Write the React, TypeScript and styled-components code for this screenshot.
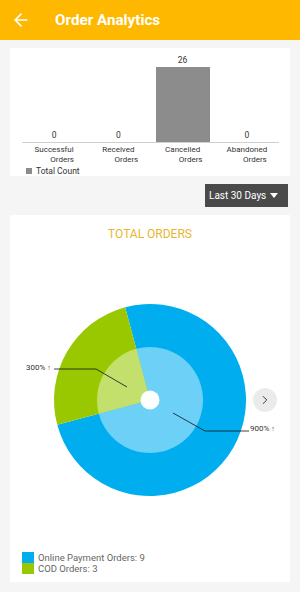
import React from "react";
import styled, { createGlobalStyle } from "styled-components";
import { ArrowLeft, ChevronRight } from "lucide-react";

const Global = createGlobalStyle`
  html, body { margin: 0; padding: 0; background: #f5f5f5; }
  body { font-family: Roboto, "Noto Sans", sans-serif; }
`;

const Page = styled.div`
  width: 300px;
  height: 592px;
  background: #f5f5f5;
  display: flex;
  flex-direction: column;
  overflow: hidden;
`;

const Header = styled.header`
  height: 40px;
  background: #ffb800;
  display: flex;
  align-items: center;
  padding-left: 11px;
  gap: 24px;
  color: #fff;
  flex-shrink: 0;
`;

const Title = styled.h1`
  margin: 0;
  font-size: 15.2px;
  font-weight: 700;
  color: #fff;
`;

const Card = styled.section<{ $top: number; $height: number }>`
  margin: ${(p) => p.$top}px 10px 0 10px;
  height: ${(p) => p.$height}px;
  background: #fff;
  box-sizing: border-box;
  display: flex;
  flex-direction: column;
  flex-shrink: 0;
`;

const BarCard = styled(Card)`
  padding: 0 11px 0 12px;
`;

const Plot = styled.div`
  height: 94px;
  display: flex;
  align-items: flex-end;
  border-bottom: 1px solid #cfcfcf;
`;

const BarSlot = styled.div`
  flex: 1;
  display: flex;
  flex-direction: column;
  align-items: center;
  justify-content: flex-end;
`;

const BarValue = styled.span`
  font-size: 8.5px;
  line-height: 11px;
  color: #333;
  margin-bottom: 1px;
`;

const Bar = styled.div<{ $h: number }>`
  width: 54px;
  height: ${(p) => p.$h}px;
  background: #8c8c8c;
`;

const Labels = styled.div`
  display: flex;
  padding-top: 2px;
`;

const Label = styled.div`
  flex: 1;
  display: flex;
  flex-direction: column;
  align-items: center;
  font-size: 8px;
  line-height: 9.5px;
  color: #333;
`;

const LabelSecond = styled.span`
  padding-left: 16px;
`;

const BarLegend = styled.div`
  display: flex;
  align-items: center;
  gap: 4px;
  margin-top: 2px;
  padding-left: 4px;
  font-size: 8.5px;
  color: #333;
`;

const LegendDot = styled.span<{ $c: string; $w: number; $h: number }>`
  width: ${(p) => p.$w}px;
  height: ${(p) => p.$h}px;
  background: ${(p) => p.$c};
  display: inline-block;
  flex-shrink: 0;
`;

const FilterRow = styled.div`
  display: flex;
  justify-content: flex-end;
  padding: 8px 12px 0 0;
  flex-shrink: 0;
`;

const Dropdown = styled.button`
  width: 83px;
  height: 23px;
  background: #4a4a4a;
  border: none;
  color: #fff;
  font-family: Roboto, sans-serif;
  font-size: 10px;
  display: flex;
  align-items: center;
  justify-content: space-between;
  padding: 0 10px 0 4px;
  box-sizing: border-box;
`;

const Caret = styled.span`
  width: 0;
  height: 0;
  border-left: 4.5px solid transparent;
  border-right: 4.5px solid transparent;
  border-top: 5px solid #fff;
`;

const PieCard = styled(Card)`
  padding-top: 12px;
`;

const PieTitle = styled.div`
  text-align: center;
  font-size: 12px;
  line-height: 14px;
  color: #e9b52f;
`;

const ChartArea = styled.div`
  position: relative;
  height: 304px;
`;

const NavButton = styled.button`
  position: absolute;
  left: 243px;
  top: 147px;
  width: 24px;
  height: 24px;
  border-radius: 50%;
  border: none;
  background: #ebebeb;
  display: flex;
  align-items: center;
  justify-content: center;
  padding: 0;
  color: #222;
`;

const PieLegend = styled.div`
  display: flex;
  flex-direction: column;
  padding: 7px 0 0 12px;
`;

const PieLegendItem = styled.div`
  display: flex;
  align-items: center;
  gap: 4px;
  font-size: 9.5px;
  line-height: 11px;
  color: #666;
`;

const bars = [
  { a: "Successful", v: 0 },
  { a: "Received", v: 0 },
  { a: "Cancelled", v: 26 },
  { a: "Abandoned", v: 0 },
];

const cx = 140;
const cy = 159;

function pt(r: number, deg: number) {
  const rad = (deg * Math.PI) / 180;
  return [cx + r * Math.sin(rad), cy - r * Math.cos(rad)];
}

function wedge(r: number, a0: number, a1: number) {
  const [x0, y0] = pt(r, a0);
  const [x1, y1] = pt(r, a1);
  const large = a1 - a0 > 180 ? 1 : 0;
  return `M${cx},${cy} L${x0},${y0} A${r},${r} 0 ${large} 1 ${x1},${y1} Z`;
}

function Pie() {
  return (
    <svg width="280" height="304" viewBox="0 0 280 304">
      <path d={wedge(96, -15, 255)} fill="#00aeef" />
      <path d={wedge(96, 255, 345)} fill="#99c800" />
      <path d={wedge(53, -15, 255)} fill="#6dd0f7" />
      <path d={wedge(53, 255, 345)} fill="#c4e06c" />
      <circle cx={cx} cy={cy} r={9.5} fill="#fff" />
      <polyline points="44,128 86,128 117,146" fill="none" stroke="#111" strokeWidth="0.8" />
      <polyline points="163,172 195,190 239,190" fill="none" stroke="#111" strokeWidth="0.8" />
      <text x="16" y="129" fontSize="8" fill="#333" fontFamily="Roboto, sans-serif">300% <tspan fontSize="7">↑</tspan></text>
      <text x="240" y="190" fontSize="8" fill="#333" fontFamily="Roboto, sans-serif">900% <tspan fontSize="7">↑</tspan></text>
    </svg>
  );
}

export default function App() {
  return (
    <Page>
      <Global />
      <Header>
        <ArrowLeft size={20} strokeWidth={2} color="#fff" />
        <Title>Order Analytics</Title>
      </Header>
      <BarCard $top={8} $height={128}>
        <Plot>
          {bars.map((b) => (
            <BarSlot key={b.a}>
              <BarValue>{b.v}</BarValue>
              <Bar $h={b.v ? 75 : 0} />
            </BarSlot>
          ))}
        </Plot>
        <Labels>
          {bars.map((b) => (
            <Label key={b.a}>
              <span>{b.a}</span>
              <LabelSecond>Orders</LabelSecond>
            </Label>
          ))}
        </Labels>
        <BarLegend>
          <LegendDot $c="#8c8c8c" $w={6} $h={6} />
          Total Count
        </BarLegend>
      </BarCard>
      <FilterRow>
        <Dropdown>
          Last 30 Days
          <Caret />
        </Dropdown>
      </FilterRow>
      <PieCard $top={8} $height={367}>
        <PieTitle>TOTAL ORDERS</PieTitle>
        <ChartArea>
          <Pie />
          <NavButton>
            <ChevronRight size={14} strokeWidth={1.5} />
          </NavButton>
        </ChartArea>
        <PieLegend>
          <PieLegendItem>
            <LegendDot $c="#00aeef" $w={12} $h={11} />
            Online Payment Orders: 9
          </PieLegendItem>
          <PieLegendItem>
            <LegendDot $c="#99c800" $w={12} $h={11} />
            COD Orders: 3
          </PieLegendItem>
        </PieLegend>
      </PieCard>
    </Page>
  );
}
